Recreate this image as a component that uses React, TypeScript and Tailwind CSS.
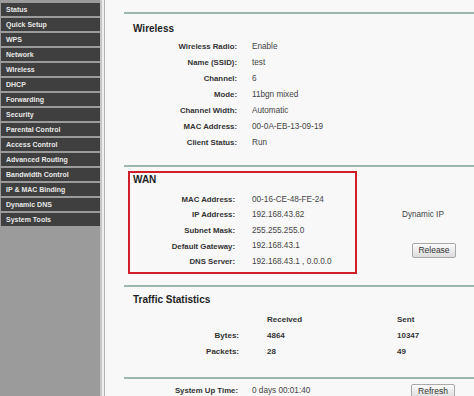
import React from "react";

const MENU = [
  "Status",
  "Quick Setup",
  "WPS",
  "Network",
  "Wireless",
  "DHCP",
  "Forwarding",
  "Security",
  "Parental Control",
  "Access Control",
  "Advanced Routing",
  "Bandwidth Control",
  "IP & MAC Binding",
  "Dynamic DNS",
  "System Tools",
];

const WIRELESS: [string, string][] = [
  ["Wireless Radio:", "Enable"],
  ["Name (SSID):", "test"],
  ["Channel:", "6"],
  ["Mode:", "11bgn mixed"],
  ["Channel Width:", "Automatic"],
  ["MAC Address:", "00-0A-EB-13-09-19"],
  ["Client Status:", "Run"],
];

const WAN: [string, string][] = [
  ["MAC Address:", "00-16-CE-48-FE-24"],
  ["IP Address:", "192.168.43.82"],
  ["Subnet Mask:", "255.255.255.0"],
  ["Default Gateway:", "192.168.43.1"],
  ["DNS Server:", "192.168.43.1 , 0.0.0.0"],
];

function Rule() {
  return <div className="h-[2px] bg-[#9cb8ad]" />;
}

function Btn({ label }: { label: string }) {
  return (
    <button className="h-[15px] w-[44px] rounded-[2px] border border-[#a8a8a8] bg-gradient-to-b from-[#fbfbfb] to-[#dcdcdc] text-[8.5px] leading-none text-[#333]">
      {label}
    </button>
  );
}

function Title({ children }: { children: React.ReactNode }) {
  return <h2 className="h-[12px] text-[10px] font-bold leading-[12px] text-[#1e1e1e]">{children}</h2>;
}

function Row({ label, value, wan = false }: { label: string; value: string; wan?: boolean }) {
  return (
    <div className={wan ? "flex h-[15.6px] items-center" : "flex h-[16px] items-center"}>
      <span className="w-[113px] text-right text-[7.8px] font-bold text-[#333]">{label}</span>
      <span className={wan ? "ml-[17px] text-[8.2px] text-[#444]" : "ml-[15px] text-[8.2px] text-[#444]"}>
        {value}
      </span>
    </div>
  );
}

export default function App() {
  return (
    <div
      className="flex h-[396px] w-[474px] overflow-hidden leading-none"
      style={{ fontFamily: '"Liberation Sans", Arial, sans-serif' }}
    >
      <nav className="flex w-[100px] flex-col gap-[2px] bg-[#9b9b9b] pt-[3px] pl-px">
        {MENU.map((m) => (
          <div
            key={m}
            className="flex h-[13px] items-center bg-[#3f3f3f] pl-[5px] text-[7px] font-bold text-[#e8e8e8]"
          >
            {m}
          </div>
        ))}
      </nav>
      <div className="w-[2px] bg-[#c6c6c6]" />
      <div className="w-[2px] bg-[#eeeeee]" />
      <div className="w-px bg-[#b4b4b4]" />

      <main className="flex-1 bg-[#f8f8f8] pl-[19px] pt-[12px]">
        <Rule />
        <div className="pl-[9px] pt-[9px]">
          <Title>Wireless</Title>
          <div className="mt-[4px] -ml-[9px]">
            {WIRELESS.map(([l, v]) => (
              <Row key={l} label={l} value={v} />
            ))}
          </div>
        </div>

        <div className="mt-[14px]">
          <Rule />
        </div>

        <div className="mt-[4px] flex">
          <div className="ml-[4px] w-[229px] border-2 border-[#cf1f2a] pb-[2px] pl-[3px] pt-px">
            <Title>WAN</Title>
            <div className="mt-[6px] -ml-[11px]">
              {WAN.map(([l, v]) => (
                <Row key={l} label={l} value={v} wan />
              ))}
            </div>
          </div>
          <div className="ml-[45px] flex flex-col pt-[39px]">
            <span className="h-[10px] text-[8.2px] leading-[10px] text-[#444]">Dynamic IP</span>
            <div className="ml-[10px] mt-[20px]">
              <Btn label="Release" />
            </div>
          </div>
        </div>

        <div className="mt-[11px]">
          <Rule />
        </div>

        <div className="pl-[9px] pt-[7px]">
          <Title>Traffic Statistics</Title>
          <div className="mt-[6px] grid grid-cols-[106px_158px_auto] grid-rows-[16px_16px_17px] items-center text-[8px] font-bold text-[#333]">
            <span />
            <span className="pl-[28px]">Received</span>
            <span>Sent</span>
            <span className="text-right">Bytes:</span>
            <span className="pl-[28px]">4864</span>
            <span>10347</span>
            <span className="text-right">Packets:</span>
            <span className="pl-[28px]">28</span>
            <span>49</span>
          </div>
        </div>

        <div className="mt-[16px]">
          <Rule />
        </div>
        <div className="flex items-start pt-[5px]">
          <span className="mt-[3px] w-[114px] text-right text-[7.8px] font-bold text-[#333]">System Up Time:</span>
          <span className="ml-[14px] mt-[3px] w-[159px] text-[8.2px] text-[#444]">0 days 00:01:40</span>
          <Btn label="Refresh" />
        </div>
      </main>
    </div>
  );
}
